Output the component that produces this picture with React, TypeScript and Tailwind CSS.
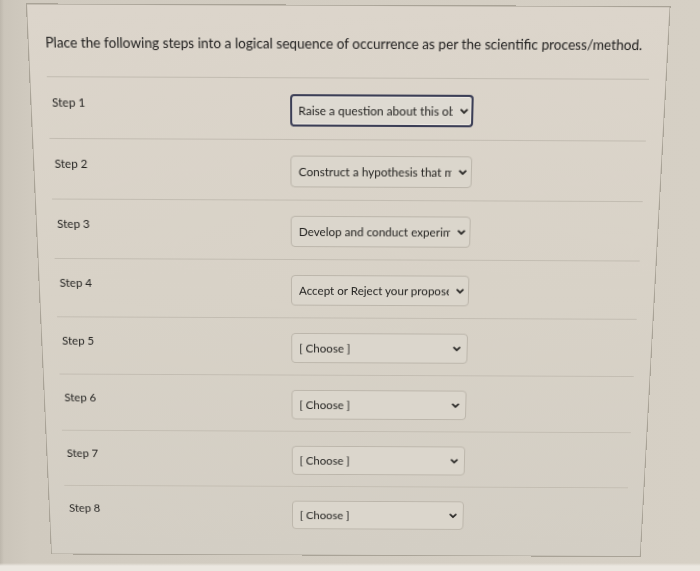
import React from "react";

type Step = {
  label: string;
  value?: string;
  focused?: boolean;
};

const steps: Step[] = [
  { label: "Step 1", value: "Raise a question about this observation", focused: true },
  { label: "Step 2", value: "Construct a hypothesis that may explain the observation" },
  { label: "Step 3", value: "Develop and conduct experiments to test it" },
  { label: "Step 4", value: "Accept or Reject your proposed hypothesis" },
  { label: "Step 5" },
  { label: "Step 6" },
  { label: "Step 7" },
  { label: "Step 8" },
];

function Chevron() {
  return (
    <svg width="8" height="6" viewBox="0 0 8 6" className="shrink-0">
      <path d="M1.2 1.4 4 4.2 6.8 1.4" fill="none" stroke="#2a2927" strokeWidth="1.9" strokeLinecap="round" strokeLinejoin="round" />
    </svg>
  );
}

function Select({ value, focused }: { value?: string; focused?: boolean }) {
  return (
    <div
      className={
        "flex h-[31px] w-[178px] items-center rounded-[4px] " +
        (focused
          ? "border-2 border-[#3b3e56] bg-[#dedad2] pl-[6px] pr-[2px] shadow-[inset_0_0_0_1px_#ece8e1]"
          : value
            ? "border border-[#bcb6ab] bg-[#dbd6cc] pl-[7px] pr-[3px]"
            : "border border-[#bcb6ab] bg-[#dbd6cc] pl-[7px] pr-[5px]")
      }
    >
      {value ? (
        <span className="w-[150px] overflow-hidden whitespace-nowrap text-[11.6px] leading-[16px] text-[#252422]">{value}</span>
      ) : (
        <span className="flex-1 text-[11.6px] leading-[16px] text-[#252422]">[ Choose ]</span>
      )}
      <span className="ml-auto flex w-[10px] justify-center">
        <Chevron />
      </span>
    </div>
  );
}

export default function App() {
  return (
    <div className="h-[571px] w-[700px] overflow-hidden bg-[linear-gradient(to_bottom,transparent_0,transparent_563px,#ebe7e0_566px),linear-gradient(to_right,#bdb7ac_0,#cbc5ba_4px,#d0cabf_30px,#d6d0c5_100%)] font-['Lato','Liberation_Sans',sans-serif]">
      <div className="ml-[39px] mt-[14px] h-[557px] w-[616px] border border-[#a9a397] bg-[linear-gradient(to_bottom,#dcd5cb,#d8d2c7_50%,#d3cec4)] px-4 [transform:perspective(1000px)_rotate(0.25deg)_rotateX(-9.2deg)]">
        <p className="whitespace-nowrap pt-[25px] text-[13.15px] leading-[20px] text-[#222120]">
          Place the following steps into a logical sequence of occurrence as per the scientific process/method.
        </p>
        <div className="mt-[22px]">
          {steps.map((s) => (
            <div key={s.label} className="grid grid-cols-[235px_178px] items-start border-t border-[#c3bdb2] pb-[12px] pt-[15px]">
              <span className="mt-[1px] pl-[4px] text-[11.5px] leading-[16px] text-[#252422]">{s.label}</span>
              <Select value={s.value} focused={s.focused} />
            </div>
          ))}
        </div>
      </div>
    </div>
  );
}
